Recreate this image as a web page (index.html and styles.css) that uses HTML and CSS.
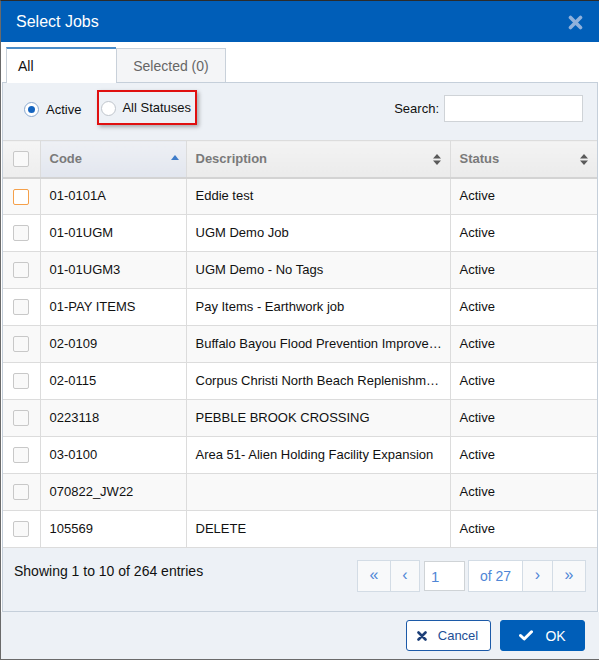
FILE: index.html
```html
<!DOCTYPE html>
<html>
<head>
<meta charset="utf-8">
<link rel="stylesheet" href="styles.css">
</head>
<body>
<div class="dialog">
  <div class="titlebar">
    <span class="title">Select Jobs</span>
    <svg class="close" width="15" height="15" viewBox="0 0 15 15"><path d="M2.5 2.5 L12.5 12.5 M12.5 2.5 L2.5 12.5" stroke="#8fb1dc" stroke-width="3.6" stroke-linecap="round"/></svg>
  </div>
  <div class="content">
    <div class="tabs">
      <div class="tab active">All</div>
      <div class="tab">Selected (0)</div>
    </div>
    <div class="panel">
      <div class="toolbar">
        <label class="radio first-radio"><span class="dot on"></span>Active</label>
        <label class="radio highlight"><span class="dot"></span>All Statuses</label>
        <div class="search">
          <span>Search:</span>
          <input type="text" class="search-input">
        </div>
      </div>
      <table class="grid">
        <colgroup><col class="c1"><col class="c2"><col class="c3"><col class="c4"></colgroup>
        <thead>
          <tr>
            <th class="chk"><span class="box"></span></th>
            <th class="sorted">Code<svg class="sort-up" width="8" height="5" viewBox="0 0 8 5"><path d="M0 5 L4 0 L8 5Z" fill="#3f7cc9"/></svg></th>
            <th>Description<svg class="sort-both" width="8" height="11" viewBox="0 0 8 11"><path d="M0 4.5 L4 0 L8 4.5Z M0 6.5 L4 11 L8 6.5Z" fill="#5a5a5a"/></svg></th>
            <th>Status<svg class="sort-both" width="8" height="11" viewBox="0 0 8 11"><path d="M0 4.5 L4 0 L8 4.5Z M0 6.5 L4 11 L8 6.5Z" fill="#5a5a5a"/></svg></th>
          </tr>
        </thead>
        <tbody>
          <tr><td class="chk"><span class="box focus"></span></td><td>01-0101A</td><td>Eddie test</td><td>Active</td></tr>
          <tr><td class="chk"><span class="box"></span></td><td>01-01UGM</td><td>UGM Demo Job</td><td>Active</td></tr>
          <tr><td class="chk"><span class="box"></span></td><td>01-01UGM3</td><td>UGM Demo - No Tags</td><td>Active</td></tr>
          <tr><td class="chk"><span class="box"></span></td><td>01-PAY ITEMS</td><td>Pay Items - Earthwork job</td><td>Active</td></tr>
          <tr><td class="chk"><span class="box"></span></td><td>02-0109</td><td class="desc-wide">Buffalo Bayou Flood Prevention Improvements</td><td>Active</td></tr>
          <tr><td class="chk"><span class="box"></span></td><td>02-0115</td><td class="desc-narrow">Corpus Christi North Beach Replenishment</td><td>Active</td></tr>
          <tr><td class="chk"><span class="box"></span></td><td>0223118</td><td>PEBBLE BROOK CROSSING</td><td>Active</td></tr>
          <tr><td class="chk"><span class="box"></span></td><td>03-0100</td><td>Area 51- Alien Holding Facility Expansion</td><td>Active</td></tr>
          <tr><td class="chk"><span class="box"></span></td><td>070822_JW22</td><td></td><td>Active</td></tr>
          <tr><td class="chk"><span class="box"></span></td><td>105569</td><td>DELETE</td><td>Active</td></tr>
        </tbody>
      </table>
      <div class="grid-footer">
        <span class="info">Showing 1 to 10 of 264 entries</span>
        <div class="pager">
          <span class="pbtn first">&laquo;</span>
          <span class="pbtn prev">&lsaquo;</span>
          <span class="pinput">1</span>
          <span class="pof">of 27</span>
          <span class="pbtn next">&rsaquo;</span>
          <span class="pbtn last">&raquo;</span>
        </div>
      </div>
    </div>
    <div class="actions">
      <button class="btn cancel"><svg width="10" height="10" viewBox="0 0 10 10"><path d="M1.5 1.5 L8.5 8.5 M8.5 1.5 L1.5 8.5" stroke="#1d3f78" stroke-width="2.6" stroke-linecap="round"/></svg>Cancel</button>
      <button class="btn ok"><svg width="14" height="11" viewBox="0 0 14 11"><path d="M1.5 5.5 L5.2 9 L12.5 1.8" stroke="#fff" stroke-width="3" fill="none" stroke-linecap="round" stroke-linejoin="round"/></svg>OK</button>
    </div>
  </div>
</div>
</body>
</html>
```

FILE: styles.css
```css
* { box-sizing: border-box; }
html, body { margin: 0; padding: 0; }
body {
  width: 599px;
  height: 660px;
  overflow: hidden;
  font-family: "Liberation Sans", Arial, sans-serif;
  font-size: 14px;
  color: #111;
  background: #fff;
}
.dialog {
  width: 599px;
  height: 660px;
  border-top: 1px solid #2b2b2b;
  border-left: 1px solid #6a6a6a;
  border-bottom: 1px solid #6a6a6a;
  display: flex;
  flex-direction: column;
}
.titlebar {
  height: 41px;
  flex: none;
  background: #005eb8;
  color: #fff;
  display: flex;
  align-items: center;
  justify-content: space-between;
  padding: 0 16px 0 15px;
}
.title { font-size: 16px; }
.close { margin-top: 1px; }
.content {
  flex: 1;
  display: flex;
  flex-direction: column;
  background: #fff;
}
.tabs {
  display: flex;
  padding: 5px 0 0 5px;
  height: 40px;
  flex: none;
  background: #fff;
  position: relative;
  z-index: 1;
}
.tab {
  width: 110px;
  height: 34px;
  margin-top: 1px;
  border: 1px solid #c9d1da;
  border-bottom: none;
  background: #f4f5f7;
  color: #666;
  font-size: 14px;
  display: flex;
  align-items: center;
  justify-content: center;
  padding-top: 0;
}
.tab.active {
  margin-top: 0;
  height: 36px;
  border-top: 2px solid #4a8cc8;
  background: #fff;
  color: #111;
  justify-content: flex-start;
  padding-left: 11px;
  margin-bottom: -1px;
  border-right: none;
}
.panel {
  margin: 0 1px 0 1px;
  border: 1px solid #c5cfda;
  background: #edf1f6;
  display: flex;
  flex-direction: column;
  height: 530px;
  flex: none;
}
.toolbar {
  height: 57px;
  display: flex;
  align-items: flex-start;
  padding: 7px 14px 0 21px;
  font-size: 13px;
}
.radio {
  display: flex;
  align-items: center;
  font-size: 13px;
  color: #111;
  height: 35px;
}
.first-radio { padding-top: 3px; }
.dot {
  width: 15px;
  height: 15px;
  border-radius: 50%;
  border: 1px solid #bfc5cc;
  background: #fff;
  margin-right: 7px;
  display: inline-block;
  position: relative;
}
.dot.on { border-color: #8aa9cf; }
.dot.on::after {
  content: "";
  position: absolute;
  left: 3px; top: 3px;
  width: 7px; height: 7px;
  border-radius: 50%;
  background: #1565c0;
}
.highlight {
  margin-left: 16px;
  width: 100px;
  padding: 0 0 0 2px;
  border: 2px solid #e01010;
  box-shadow: 2px 2px 4px rgba(0,0,0,0.3);
}
.highlight .dot { margin-right: 6px; margin-top: 1px; }
.search {
  margin-left: auto;
  display: flex;
  align-items: center;
  gap: 5px;
  margin-top: 5px;
}
.search-input {
  width: 139px;
  height: 27px;
  border: 1px solid #cfd3d7;
  background: #fff;
  margin: 0;
  padding: 0;
}
.grid {
  border-collapse: collapse;
  table-layout: fixed;
  width: 594px;
  background: #fff;
  font-size: 13px;
}
.c1 { width: 37px; }
.c2 { width: 146px; }
.c3 { width: 264px; }
.c4 { width: 147px; }
.grid th, .grid td {
  border: 1px solid #dcdcdc;
  text-align: left;
  padding: 0 8px 0 9px;
  white-space: nowrap;
  overflow: hidden;
  text-overflow: ellipsis;
}
.grid td.desc-wide { padding-right: 5px; }
.grid td.desc-narrow { padding-right: 9px; }
.grid tr > :first-child { border-left: none; }
.grid tr > :last-child { border-right: none; }
.grid th {
  height: 37px;
  font-weight: bold;
  color: #7a7a7a;
  background: linear-gradient(#f3f3f3, #ebebeb);
  border-bottom: 2px solid #d3d3d3;
  position: relative;
}
.grid th.sorted { background: linear-gradient(#eef0f5, #e2e6ee); }
.grid td { height: 37px; padding-bottom: 1px; }
.grid tbody tr:nth-child(odd) td { background: #f9f9f9; }
.grid .chk { padding: 0; text-align: center; }
.grid th.chk { background: linear-gradient(#f5f5f5, #ededed); }
.box {
  display: inline-block;
  width: 16px;
  height: 16px;
  border: 1px solid #c8c8c8;
  border-radius: 2px;
  background: #f9f9f9;
  vertical-align: middle;
}
.box.focus { border-color: #f5a04a; background: #fff; }
.sort-up {
  position: absolute;
  right: 7px;
  top: 14px;
}
.sort-both {
  position: absolute;
  right: 9px;
  top: 13px;
}
.grid-footer {
  flex: 1;
  display: flex;
  align-items: flex-start;
  justify-content: space-between;
  padding: 12px 11px 0 11px;
}
.info { font-size: 14px; margin-top: 3px; color: #111; }
.pager {
  display: flex;
  align-items: center;
  height: 32px;
}
.pbtn {
  height: 32px;
  border: 1px solid #d3dce5;
  background: #f8f9fa;
  color: #4f86d6;
  font-size: 16px;
  display: flex;
  align-items: center;
  justify-content: center;
  padding-bottom: 2px;
}
.first { width: 34px; }
.prev { width: 29px; border-left: none; }
.next { width: 30px; border-left: none; }
.last { width: 33px; border-left: none; }
.pinput {
  width: 41px;
  height: 30px;
  margin: 0 3px 0 4px;
  border: 1px solid #cfd3d6;
  background: #fff;
  color: #4f86d6;
  font-size: 15px;
  display: flex;
  align-items: center;
  padding-left: 6px;
  align-self: flex-start;
  margin-top: 1px;
}
.pof {
  width: 55px;
  height: 32px;
  border: 1px solid #d3dce5;
  background: #fff;
  color: #4f86d6;
  font-size: 14px;
  display: flex;
  align-items: center;
  justify-content: center;
}
.actions {
  flex: 1;
  background: #edf1f6;
  display: flex;
  justify-content: flex-end;
  align-items: flex-start;
  padding: 8px 14px 0 0;
  gap: 9px;
}
.btn {
  height: 31px;
  border-radius: 3px;
  font-family: "Liberation Sans", Arial, sans-serif;
  font-size: 13px;
  display: flex;
  align-items: center;
  justify-content: center;
  gap: 11px;
  margin: 0;
  padding: 0;
}
.cancel {
  width: 85px;
  border: 1px solid #1c5aa8;
  background: #fff;
  color: #1d4f96;
  padding-right: 2px;
}
.ok {
  width: 85px;
  border: 1px solid #005eb8;
  background: #005eb8;
  color: #fff;
  font-size: 14px;
  gap: 12px;
}
```
